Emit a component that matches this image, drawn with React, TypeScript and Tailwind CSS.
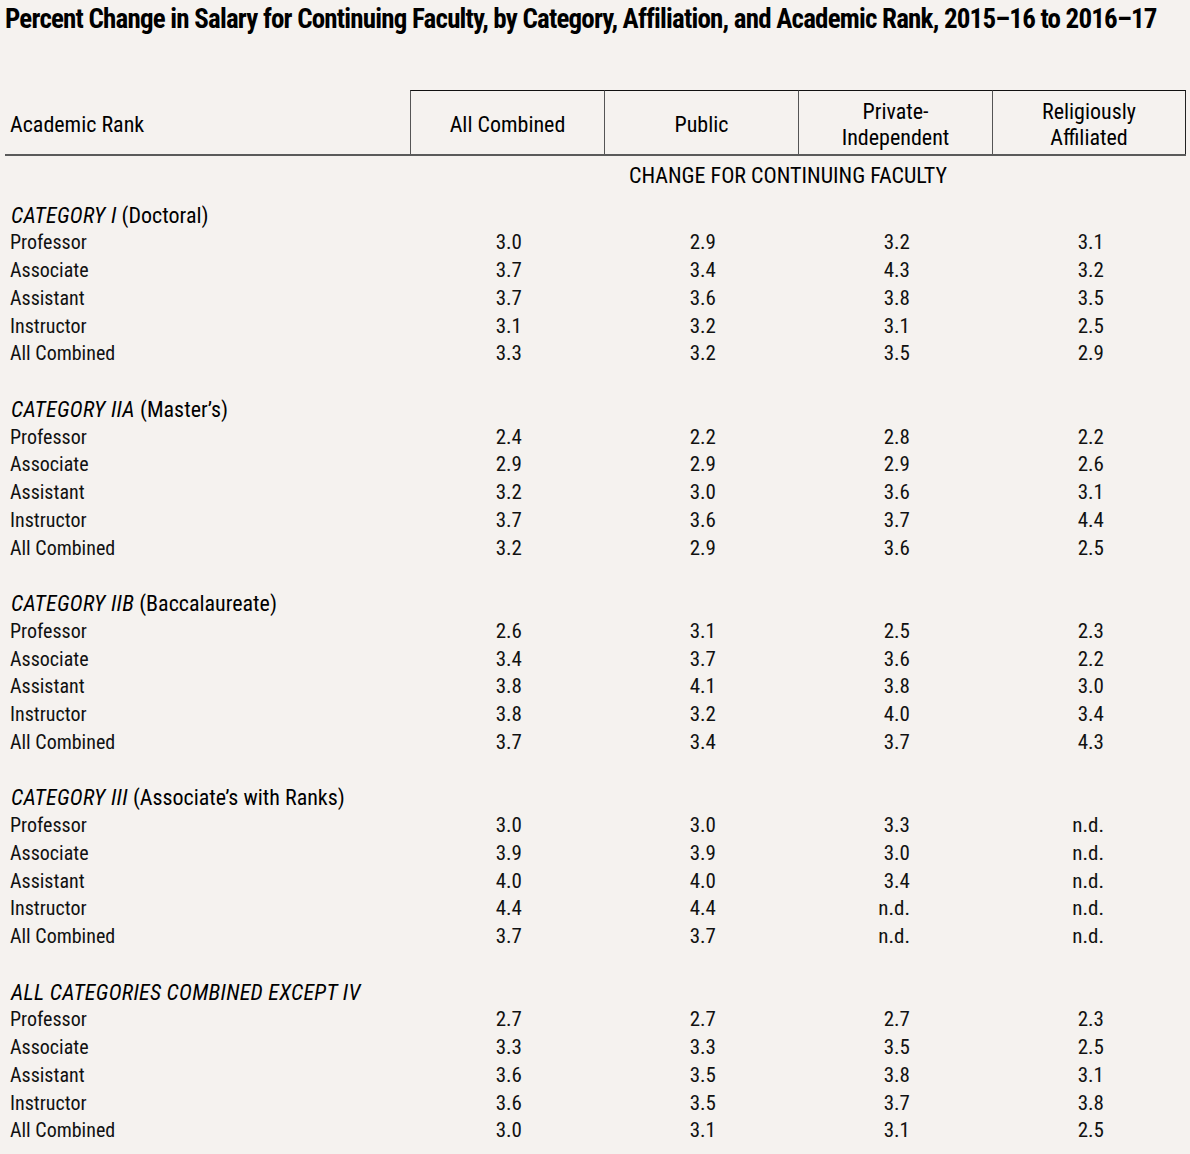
import React from 'react';

type Row = { rank: string; values: string[] };
type Group = { name: string; sub?: string; rows: Row[] };

const ranks = ['Professor', 'Associate', 'Assistant', 'Instructor', 'All Combined'];

const build = (vals: string[][]): Row[] => vals.map((v, i) => ({ rank: ranks[i], values: v }));

const groups: Group[] = [
  {
    name: 'CATEGORY I',
    sub: '(Doctoral)',
    rows: build([
      ['3.0', '2.9', '3.2', '3.1'],
      ['3.7', '3.4', '4.3', '3.2'],
      ['3.7', '3.6', '3.8', '3.5'],
      ['3.1', '3.2', '3.1', '2.5'],
      ['3.3', '3.2', '3.5', '2.9'],
    ]),
  },
  {
    name: 'CATEGORY IIA',
    sub: '(Master\u2019s)',
    rows: build([
      ['2.4', '2.2', '2.8', '2.2'],
      ['2.9', '2.9', '2.9', '2.6'],
      ['3.2', '3.0', '3.6', '3.1'],
      ['3.7', '3.6', '3.7', '4.4'],
      ['3.2', '2.9', '3.6', '2.5'],
    ]),
  },
  {
    name: 'CATEGORY IIB',
    sub: '(Baccalaureate)',
    rows: build([
      ['2.6', '3.1', '2.5', '2.3'],
      ['3.4', '3.7', '3.6', '2.2'],
      ['3.8', '4.1', '3.8', '3.0'],
      ['3.8', '3.2', '4.0', '3.4'],
      ['3.7', '3.4', '3.7', '4.3'],
    ]),
  },
  {
    name: 'CATEGORY III',
    sub: '(Associate\u2019s with Ranks)',
    rows: build([
      ['3.0', '3.0', '3.3', 'n.d.'],
      ['3.9', '3.9', '3.0', 'n.d.'],
      ['4.0', '4.0', '3.4', 'n.d.'],
      ['4.4', '4.4', 'n.d.', 'n.d.'],
      ['3.7', '3.7', 'n.d.', 'n.d.'],
    ]),
  },
  {
    name: 'ALL CATEGORIES COMBINED EXCEPT IV',
    rows: build([
      ['2.7', '2.7', '2.7', '2.3'],
      ['3.3', '3.3', '3.5', '2.5'],
      ['3.6', '3.5', '3.8', '3.1'],
      ['3.6', '3.5', '3.7', '3.8'],
      ['3.0', '3.1', '3.1', '2.5'],
    ]),
  },
];

const grid = 'grid w-[1181px] grid-cols-[405px_194px_194px_194px_194px]';
const headCell = 'flex h-[64px] items-center justify-center border-t border-l border-t-[#111] border-l-[#555] pt-1 text-center leading-[26px]';

export default function App() {
  return (
    <div className="min-h-[1154px] w-[1190px] bg-[#f5f2ef] pl-[5px] text-[#111] font-['Roboto_Condensed','DejaVu_Sans_Condensed',sans-serif]">
      <h1 className="h-[36px] whitespace-nowrap pt-px text-[27px] leading-[36px] font-bold tracking-[-0.8px] text-black">
        Percent Change in Salary for Continuing Faculty, by Category, Affiliation, and Academic Rank, 2015–16 to 2016–17
      </h1>

      {/* column headings */}
      <div className={`${grid} mt-[54px] border-b-2 border-[#5a5a5a] text-[22px] text-black`}>
        <div className="flex h-[64px] items-center pl-[5px] pt-1">Academic Rank</div>
        <div className={headCell}>All Combined</div>
        <div className={headCell}>Public</div>
        <div className={headCell}>
          Private-
          <br />
          Independent
        </div>
        <div className={`${headCell} border-r border-r-[#222]`}>
          Religiously
          <br />
          Affiliated
        </div>
      </div>

      <div className={`${grid} pt-[6px] pb-[12px] text-[22px] leading-[27.7px] text-black`}>
        <div />
        <div className="col-span-4 pr-5 text-center">CHANGE FOR CONTINUING FACULTY</div>
      </div>

      {groups.map((g) => (
        <div key={g.name} className="pb-[27.75px] leading-[27.75px]">
          <div className="pl-[6px] text-[22px] text-black">
            <span className="italic tracking-[0.3px]">{g.name}</span>
            {g.sub && <span> {g.sub}</span>}
          </div>
          {g.rows.map((r) => (
            <div key={r.rank} className={`${grid} h-[27.75px]`}>
              <div className="pl-[5px] text-[20px]">{r.rank}</div>
              {r.values.map((v, i) => (
                <div key={i} className="pr-[82px] text-right text-[21px]">
                  {v}
                </div>
              ))}
            </div>
          ))}
        </div>
      ))}
    </div>
  );
}
